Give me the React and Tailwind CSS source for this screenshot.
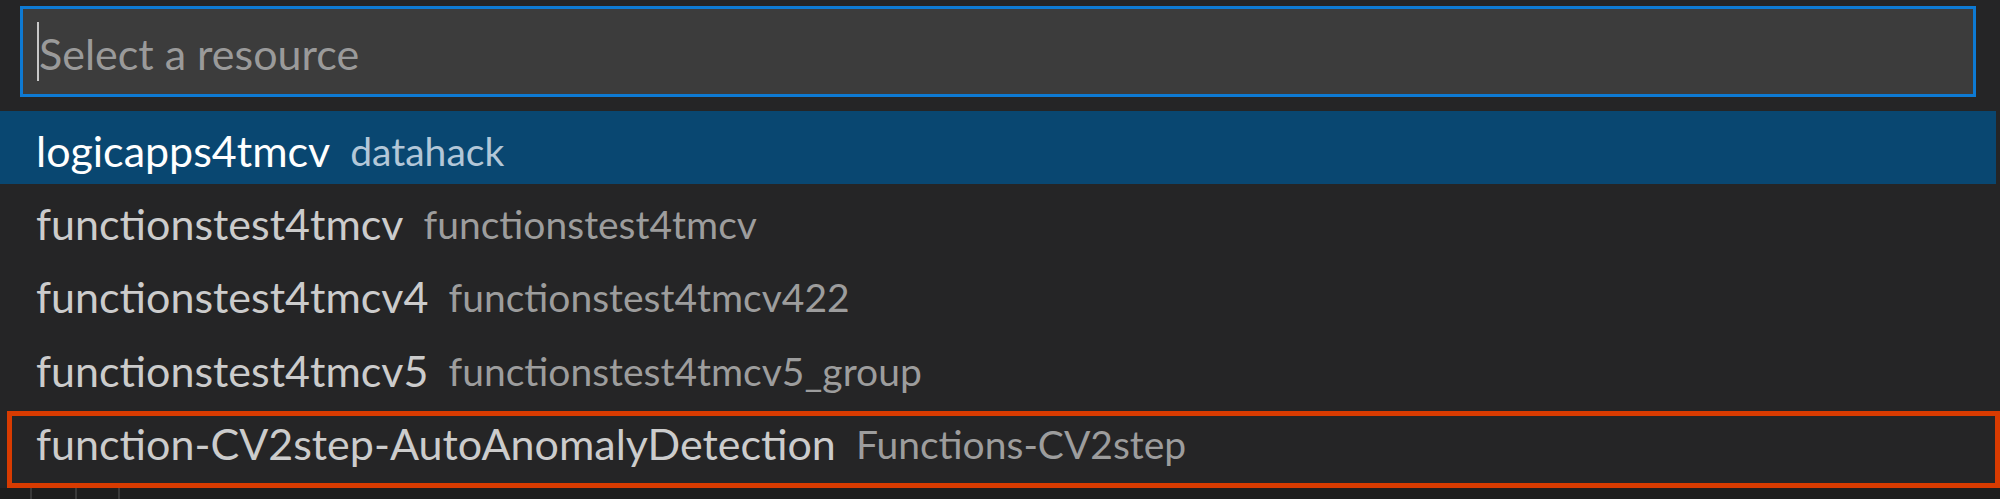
const items = [
  { label: "logicapps4tmcv", desc: "datahack", selected: true },
  { label: "functionstest4tmcv", desc: "functionstest4tmcv" },
  { label: "functionstest4tmcv4", desc: "functionstest4tmcv422" },
  { label: "functionstest4tmcv5", desc: "functionstest4tmcv5_group" },
  { label: "function-CV2step-AutoAnomalyDetection", desc: "Functions-CV2step" },
];

const App = () => {
  return (
    <div className="relative w-[2000px] h-[499px] bg-[#252526] overflow-hidden flex flex-col font-['Lato','Noto_Sans',sans-serif]">
      {/* Input */}
      <div className="pt-[6px] pl-[20px] pr-[24px]">
        <div className="h-[91px] border-[3px] border-[#0e7ad3] bg-[#3c3c3c] flex items-center pl-[14px]">
          <span className="w-[2px] h-[59px] bg-[#c8c8c8]" />
          <span className="pt-[3px] text-[43px] text-[#9a9a9a] leading-none">Select a resource</span>
        </div>
      </div>

      {/* List */}
      <div className="mt-[14px] flex flex-col pr-[4px]">
        {items.map((item) => (
          <div
            key={item.label}
            className={
              item.selected
                ? "h-[73.3px] flex items-center pt-[7px] pl-[36px] bg-[#094771]"
                : "h-[73.3px] flex items-center pt-[7px] pl-[36px]"
            }
          >
            <span className={item.selected ? "text-[43px] text-white" : "text-[43px] text-[#cccccc]"}>
              {item.label}
            </span>
            <span
              className={
                item.selected
                  ? "ml-[20px] text-[39px] text-[#b3c7d8]"
                  : "ml-[20px] text-[39px] text-[#9d9d9d]"
              }
            >
              {item.desc}
            </span>
          </div>
        ))}
      </div>

      {/* Editor behind */}
      <div className="mt-auto h-[11px] bg-[#1e1e1e] flex">
        <div className="w-[30px]" />
        <div className="w-[45px] border-l-2 border-[#3a3a3a]" />
        <div className="w-[43px] border-l-2 border-[#3a3a3a]" />
        <div className="border-l-2 border-[#3a3a3a]" />
      </div>

      {/* Annotation box */}
      <div className="absolute left-[7px] top-[411px] w-[1993px] h-[77px] border-[5px] border-[#d83b01]" />
    </div>
  );
};

export default App;
